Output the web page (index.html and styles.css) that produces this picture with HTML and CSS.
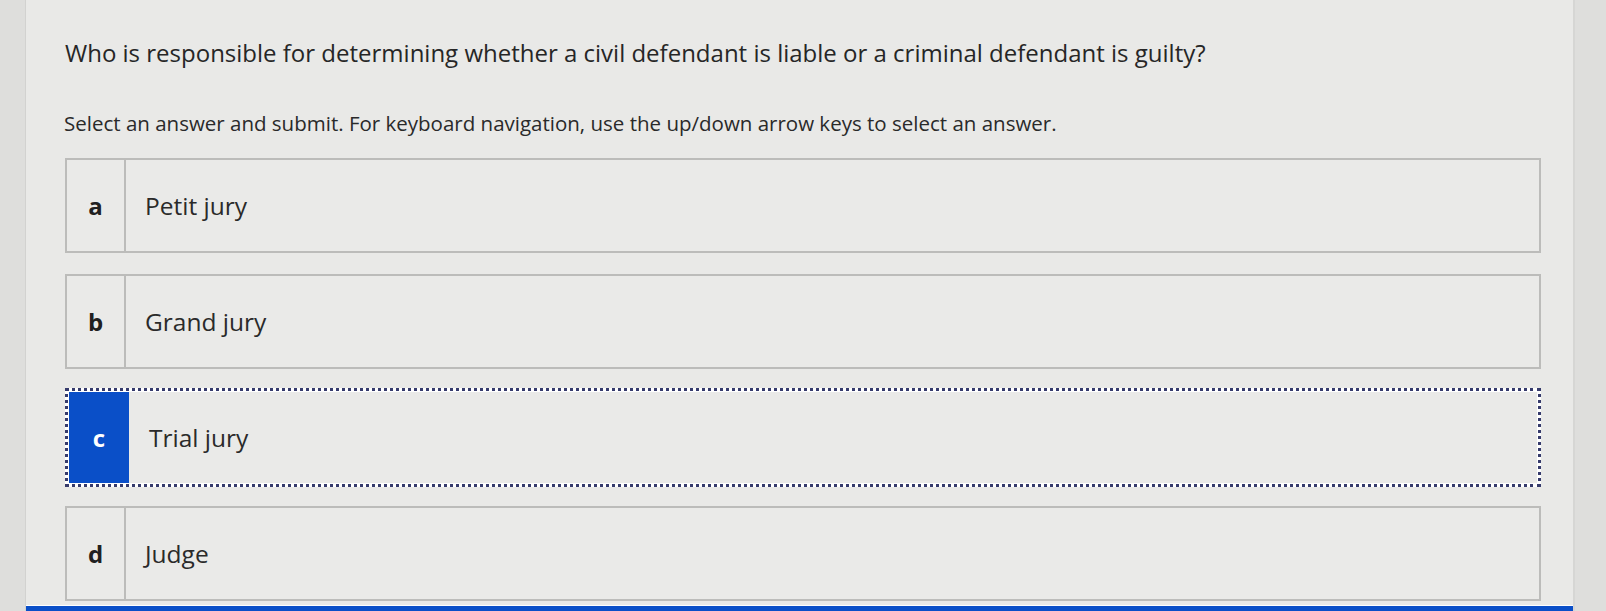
FILE: index.html
```html
<!DOCTYPE html>
<html lang="en">
<head>
<meta charset="utf-8">
<title>Question</title>
<link rel="stylesheet" href="styles.css">
</head>
<body>
<div class="page">
  <div class="content">
    <h1 class="question">Who is responsible for determining whether a civil defendant is liable or a criminal defendant is guilty?</h1>
    <p class="instruction">Select an answer and submit. For keyboard navigation, use the up/down arrow keys to select an answer.</p>
    <div class="options">
      <div class="option"><div class="letter">a</div><div class="text">Petit jury</div></div>
      <div class="option"><div class="letter">b</div><div class="text">Grand jury</div></div>
      <div class="option selected"><div class="letter">c</div><div class="text">Trial jury</div></div>
      <div class="option"><div class="letter">d</div><div class="text">Judge</div></div>
    </div>
  </div>
  <div class="footer-bar"></div>
</div>
</body>
</html>
```
FILE: styles.css
```css
* { box-sizing: border-box; }
html, body { margin: 0; padding: 0; }
body {
  background: #dededc;
  font-family: "Open Sans", "Noto Sans", sans-serif;
  color: #2e2e2e;
  height: 611px;
  overflow: hidden;
}
.page {
  margin-left: 25px;
  width: 1550px;
  height: 611px;
  background: #e9e9e7;
  border-left: 1px solid #d2d2d0;
  border-right: 2px solid #d6d6d4;
  display: flex;
  flex-direction: column;
}
.content {
  padding: 36px 0 0 39px;
  flex: 1;
}
.question {
  margin: 0;
  font-size: 24px;
  line-height: 34px;
  font-weight: 400;
  color: #262626;
}
.instruction {
  margin: 39px 0 0 -1px;
  font-size: 20.5px;
  line-height: 29px;
  color: #2a2a2a;
}
.options {
  margin-top: 20px;
  display: flex;
  flex-direction: column;
  gap: 21px;
  width: 1476px;
}
.option {
  display: flex;
  height: 95px;
  border: 2px solid #bcbcba;
  background: #eaeae8;
}
.letter {
  width: 59px;
  flex: none;
  border-right: 2px solid #bcbcba;
  display: flex;
  align-items: center;
  justify-content: center;
  font-size: 24px;
  font-weight: 700;
  color: #202020;
}
.text {
  display: flex;
  align-items: center;
  padding-left: 19px;
  font-size: 24.5px;
  color: #2a2a2a;
}
.option.selected {
  height: 99px;
  margin: -2px 0;
  border: 3px dotted #363b6c;
  padding: 1px;
  background: #ffffff;
}
.option.selected .letter {
  background: #0a4fc8;
  color: #ffffff;
  border-right: none;
  width: 60px;
}
.option.selected .text {
  flex: 1;
  background: #eaeae8;
  padding-left: 20px;
}
.footer-bar {
  height: 6px;
  background: #0a4fc8;
  border-top: 1px solid #ffffff;
}
```
